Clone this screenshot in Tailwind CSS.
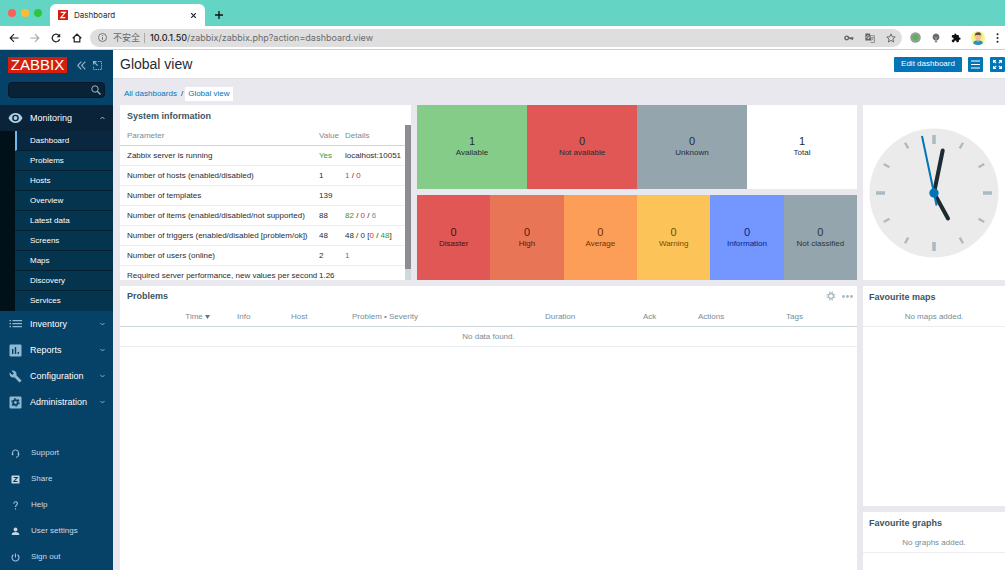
<!DOCTYPE html>
<html lang="en">
<head>
  <meta charset="UTF-8" />
  <meta name="viewport" content="width=device-width, initial-scale=1.0" />
  <title>Dashboard</title>
  <script src="https://cdn.jsdelivr.net/npm/@tailwindcss/browser@4"></script>
</head>
<body class="h-screen flex flex-col overflow-hidden bg-[#e9e8ee] text-[#1f2c33] text-[8px] leading-[12px] font-['Liberation_Sans','Noto_Sans_CJK_SC',sans-serif]">

<!-- browser tabs -->
<div class="h-[26px] shrink-0 bg-[#64d5c5] flex items-end pl-2">
  <div class="flex gap-[5px] h-[26px] items-center w-[42px]">
    <span class="size-2 rounded-full bg-[#fc5f57]"></span>
    <span class="size-2 rounded-full bg-[#fdbc2f]"></span>
    <span class="size-2 rounded-full bg-[#28c840]"></span>
  </div>
  <div class="h-[22px] w-[155px] bg-white rounded-t-md flex items-center px-2 font-[Inter,sans-serif]">
    <svg class="size-[10px] mr-[6px]" viewBox="0 0 10 10"><rect width="10" height="10" fill="#d31f10"/><path d="M2.8 2.4h4.4L2.9 7.6h4.4" fill="none" stroke="#fff" stroke-width="1.2"/></svg>
    <span class="flex-1">Dashboard</span>
    <button aria-label="Close tab"><svg class="size-[5px] mr-px" viewBox="0 0 5 5" stroke="#222" stroke-width="1.1"><path d="M0 0l5 5M5 0L0 5"/></svg></button>
  </div>
  <button class="ml-[10px] h-[22px]" aria-label="New tab"><svg class="size-2" viewBox="0 0 8 8" stroke="#111" stroke-width="1.3"><path d="M4 0v8M0 4h8"/></svg></button>
</div>

<!-- browser toolbar -->
<div class="h-[24px] shrink-0 bg-white border-b border-[#cfcfcf] flex items-center pl-[9px] pr-[5px]">
  <div class="flex gap-[11px] w-[81px]">
    <button aria-label="Back"><svg class="size-[10px]" viewBox="0 0 10 10" fill="none" stroke="#222" stroke-width="1.2"><path d="M9.5 5H1.3M5 1.2L1.2 5 5 8.8"/></svg></button>
    <button aria-label="Forward"><svg class="size-[10px]" viewBox="0 0 10 10" fill="none" stroke="#a5a5a5" stroke-width="1.1"><path d="M.5 5h8.2M5 1.2L8.8 5 5 8.8"/></svg></button>
    <button aria-label="Reload"><svg class="size-[10px]" viewBox="0 0 10 10" fill="none" stroke="#222" stroke-width="1.3"><path d="M8.6 6.2A3.8 3.8 0 1 1 7.9 2.5"/><path d="M9.2.6v3.6H5.6z" fill="#222" stroke="none"/></svg></button>
    <button aria-label="Home"><svg class="size-[10px]" viewBox="0 0 10 10" fill="none" stroke="#222" stroke-width="1.2"><path d="M.7 5.3L5 1.2l4.3 4.1M2.2 4.6v4.2h5.6V4.6"/></svg></button>
  </div>
  <label class="flex-1 h-[18px] rounded-full bg-[#dededf] flex items-center pl-2 pr-[6px] text-[9px] text-[#6a6a6c] font-[Inter,'Noto_Sans_CJK_SC',sans-serif]">
    <svg class="size-[9px] mr-[6px]" viewBox="0 0 9 9" fill="none" stroke="#6a6a6c" stroke-width="0.9"><circle cx="4.5" cy="4.5" r="4"/><path d="M4.5 4v2.8M4.5 2.2v1"/></svg>
    <span>不安全</span>
    <span class="w-px h-[10px] bg-[#aaa] ml-[4px] mr-[5px]"></span>
    <span class="text-[#222] font-medium">10.0.1.50</span>
    <input type="text" value="/zabbix/zabbix.php?action=dashboard.view" class="flex-1 min-w-0 outline-none" />
    <span class="flex items-center gap-[11px] text-[#5f6062]">
      <svg class="size-[10px]" viewBox="0 0 10 10" fill="none" stroke="currentColor" stroke-width="1.3"><circle cx="2.7" cy="5" r="1.8"/><path d="M4.5 5h5M8.2 5v2M6.4 5v1.3"/></svg>
      <svg class="size-[10px]" viewBox="0 0 10 10"><path d="M4.6 2.6h4.9v6.9H5.4" fill="none" stroke="#777" stroke-width=".7"/><path d="M.4.4h4.4l1.8 7H.4z" fill="#606163"/><path d="M4.3 3.3a1.4 1.4 0 1 0 .2 1.2H3.1" fill="none" stroke="#ddd" stroke-width=".8"/><path d="M6 4.6h2.9M7.4 3.9v.7M8.4 4.6c-.2 1.3-1 2.2-1.8 2.8M6.7 5.4c.3.8 1 1.6 1.8 2" fill="none" stroke="#777" stroke-width=".6"/></svg>
      <svg class="size-[10px]" viewBox="0 0 10 10" fill="none" stroke="currentColor" stroke-width="0.9"><path d="M5 .9l1.2 2.8 3 .3-2.3 2 .7 3L5 7.4 2.4 9l.7-3L.8 4l3-.3z"/></svg>
    </span>
  </label>
  <div class="flex items-center gap-[10px] ml-[8px]">
    <svg class="size-[11px]" viewBox="0 0 11 11"><circle cx="5.5" cy="5.5" r="5.3" fill="#9a9a9a"/><circle cx="5.5" cy="5.5" r="2.9" fill="#4bbf4e"/></svg>
    <svg class="size-[10px]" viewBox="0 0 10 10"><path d="M5 .6a3.6 3.6 0 0 1 2 6.5H3A3.6 3.6 0 0 1 5 .6z" fill="#666"/><path d="M3.5 3.8L5 5.2l1.5-1.4M5 5v2" fill="none" stroke="#ccc" stroke-width=".6"/><path d="M3.7 7.2h2.6v1.4L5.6 9.6H4.4l-.7-1z" fill="#8a8a8a"/></svg>
    <svg class="size-[10px]" viewBox="0 0 24 24" fill="#111"><path d="M20.5 11H19V7a2 2 0 0 0-2-2h-4V3.5a2.5 2.5 0 0 0-5 0V5H4a2 2 0 0 0-2 2v3.8h1.5a2.7 2.7 0 0 1 0 5.4H2V20a2 2 0 0 0 2 2h3.8v-1.5a2.7 2.7 0 0 1 5.4 0V22H17a2 2 0 0 0 2-2v-4h1.5a2.5 2.5 0 0 0 0-5z"/></svg>
    <svg class="size-[14px]" viewBox="0 0 14 14"><circle cx="7" cy="7" r="7" fill="#f3f584"/><path d="M2 12.2C2.5 10 4.5 9.5 7 9.5s4.5.5 5 2.7A7 7 0 0 1 7 14a7 7 0 0 1-5-1.8z" fill="#2591c9"/><path d="M5.8 8h2.4v2L7 11l-1.2-1z" fill="#e9a183"/><ellipse cx="7" cy="5.9" rx="2.9" ry="3.3" fill="#f6b99a"/><path d="M3.8 5.5C3.5 2.5 5 1.2 7.3 1.2S10.6 2.7 10.2 5.5L9.5 3.8C8 4.2 6 4 4.7 3.7z" fill="#5b4a45"/></svg>
    <button aria-label="Browser menu"><svg class="w-[5px] h-[10px]" viewBox="0 0 5 10" fill="#222"><circle cx="2.5" cy="1.3" r="1"/><circle cx="2.5" cy="5" r="1"/><circle cx="2.5" cy="8.7" r="1"/></svg></button>
  </div>
</div>

<div class="flex flex-1 min-h-0">

  <!-- sidebar -->
  <aside class="w-[113px] shrink-0 bg-[#064167] text-white flex flex-col">
    <div class="flex items-center px-2 pt-[7px]">
      <a href="#" class="w-[59px] h-4 bg-[#d31f10] text-center text-[15px] leading-4">ZABBIX</a>
      <button class="ml-[10px]" aria-label="Collapse sidebar"><svg class="size-[9px]" viewBox="0 0 9 9" fill="none" stroke="#8fb9d3" stroke-width="1.1"><path d="M4.3.7L.7 4.5l3.6 3.8M8.3.7L4.7 4.5l3.6 3.8"/></svg></button>
      <button class="ml-[7px]" aria-label="Hide sidebar"><svg class="size-[9px]" viewBox="0 0 9 9" fill="none" stroke="#8fb9d3"><path d="M5 .5h3.5v8h-8V5" stroke-dasharray="1.5 .8" stroke-width=".9"/><path d="M.6 3.6v-3h3M.7.7L4.6 4.6" stroke-width="1.2"/></svg></button>
    </div>
    <label class="mx-2 mt-[9px] mb-[7px] h-4 flex items-center bg-[#0a2236] border border-[#06182a] rounded-sm px-[3px]">
      <input type="text" aria-label="Search" class="flex-1 min-w-0 outline-none" />
      <svg class="size-[10px]" viewBox="0 0 10 10" fill="none" stroke="#8fb9d3" stroke-width="1"><circle cx="4" cy="4" r="3.2"/><path d="M6.3 6.3L9.5 9.5" stroke-width="1.3"/></svg>
    </label>

    <nav class="text-[9px]">
      <a href="#" class="h-[26px] flex items-center px-2 bg-[#0a2338]">
        <svg class="w-[15px] h-[12px] mr-[7px]" viewBox="0 0 15 12"><path d="M.5 6C2 2.7 4.5 1 7.5 1S13 2.7 14.500 6C13 9.3 10.500 11 7.5 11S2 9.3.5 6z" fill="#a9cfe6"/><circle cx="7.5" cy="6" r="3.3" fill="#0a2338"/><circle cx="7.5" cy="6" r="1.9" fill="#a9cfe6"/></svg>
        <span class="flex-1">Monitoring</span>
        <svg class="w-[5px] h-[4px]" viewBox="0 0 5 4" fill="none" stroke="#a9c5d6" stroke-width=".9"><path d="M.5 3l2-2 2 2"/></svg>
      </a>
      <div class="bg-[#00111a] pl-[15px] text-[8px]">
        <a href="#" class="flex items-center h-5 pl-[13px] border-l-2 border-l-[#6eb9ee] bg-[#0a2740] border-b border-b-[#02202f]">Dashboard</a>
        <a href="#" class="flex items-center h-5 pl-[15px] bg-[#05354e] border-b border-[#02202f]">Problems</a>
        <a href="#" class="flex items-center h-5 pl-[15px] bg-[#05354e] border-b border-[#02202f]">Hosts</a>
        <a href="#" class="flex items-center h-5 pl-[15px] bg-[#05354e] border-b border-[#02202f]">Overview</a>
        <a href="#" class="flex items-center h-5 pl-[15px] bg-[#05354e] border-b border-[#02202f]">Latest data</a>
        <a href="#" class="flex items-center h-5 pl-[15px] bg-[#05354e] border-b border-[#02202f]">Screens</a>
        <a href="#" class="flex items-center h-5 pl-[15px] bg-[#05354e] border-b border-[#02202f]">Maps</a>
        <a href="#" class="flex items-center h-5 pl-[15px] bg-[#05354e] border-b border-[#02202f]">Discovery</a>
        <a href="#" class="flex items-center h-5 pl-[15px] bg-[#05354e]">Services</a>
      </div>
      <a href="#" class="h-[26px] flex items-center pl-[9px] pr-2">
        <svg class="size-[13px] mr-[8px]" viewBox="0 0 13 13" stroke="#8fb9d3" stroke-width="1.2"><path d="M3.5 2.7H13M3.5 5.7H13M3.5 8.7H13M.5 2.7H2M.5 5.7H2M.5 8.7H2"/></svg>
        <span class="flex-1">Inventory</span>
        <svg class="w-[5px] h-[4px]" viewBox="0 0 5 4" fill="none" stroke="#8fb9d3" stroke-width=".9"><path d="M.5 1l2 2 2-2"/></svg>
      </a>
      <a href="#" class="h-[26px] flex items-center pl-[9px] pr-2">
        <svg class="size-[13px] mr-[8px]" viewBox="0 0 13 13"><rect x=".5" y=".5" width="12" height="12" rx="1.3" fill="#8fb9d3"/><path d="M3.7 5v5M6.5 3v7M9.3 8v2" stroke="#064167" stroke-width="1.4"/></svg>
        <span class="flex-1">Reports</span>
        <svg class="w-[5px] h-[4px]" viewBox="0 0 5 4" fill="none" stroke="#8fb9d3" stroke-width=".9"><path d="M.5 1l2 2 2-2"/></svg>
      </a>
      <a href="#" class="h-[26px] flex items-center pl-[9px] pr-2">
        <svg class="size-[13px] mr-[8px]" viewBox="0 0 24 24" fill="#8fb9d3"><path d="M22.7 19l-9.1-9.1c.9-2.3.4-5-1.5-6.9-2-2-5-2.4-7.4-1.3L9 6 6 9 1.6 4.7C.4 7.1.9 10.1 2.9 12.1c1.9 1.9 4.6 2.4 6.9 1.5l9.1 9.1c.4.4 1 .4 1.4 0l2.300-2.300c.5-.4.5-1.100.1-1.400z"/></svg>
        <span class="flex-1">Configuration</span>
        <svg class="w-[5px] h-[4px]" viewBox="0 0 5 4" fill="none" stroke="#8fb9d3" stroke-width=".9"><path d="M.5 1l2 2 2-2"/></svg>
      </a>
      <a href="#" class="h-[26px] flex items-center pl-[9px] pr-2">
        <svg class="size-[13px] mr-[8px]" viewBox="0 0 13 13"><rect x=".5" y=".5" width="12" height="12" rx="1.3" fill="#8fb9d3"/><circle cx="6.5" cy="6.5" r="2.3" fill="none" stroke="#064167" stroke-width="1.8"/><circle cx="6.5" cy="6.5" r="3.7" fill="none" stroke="#064167" stroke-width="1.2" stroke-dasharray="1.9 1.97"/></svg>
        <span class="flex-1">Administration</span>
        <svg class="w-[5px] h-[4px]" viewBox="0 0 5 4" fill="none" stroke="#8fb9d3" stroke-width=".9"><path d="M.5 1l2 2 2-2"/></svg>
      </a>
    </nav>

    <nav class="mt-auto text-[#c9dbe6]">
      <a href="#" class="h-[26px] flex items-center pl-[11px]">
        <svg class="size-[9px] mr-[11px]" viewBox="0 0 9 9" fill="none" stroke="#a4c3d6" stroke-width="1"><path d="M1.4 5V4a3.1 3.1 0 0 1 6.2 0v2.2c0 1.3-1 2-2.6 2"/><path d="M1.6 4.3v2M7.4 4.3v2" stroke-width="1.5"/></svg>
        Support
      </a>
      <a href="#" class="h-[26px] flex items-center pl-[11px]">
        <svg class="size-[9px] mr-[11px]" viewBox="0 0 9 9"><rect x=".5" y=".5" width="8" height="8" rx=".6" fill="#c3d6e2"/><path d="M2.7 2.5h3.6L2.8 6.5h3.7" fill="none" stroke="#064167" stroke-width="1.1"/></svg>
        Share
      </a>
      <a href="#" class="h-[26px] flex items-center pl-[11px]">
        <svg class="size-[9px] mr-[11px]" viewBox="0 0 9 9" fill="none" stroke="#a4c3d6" stroke-width="1.1"><path d="M2.7 2.7C2.7.2 6.4.2 6.4 2.6c0 1.4-1.9 1.6-1.9 3.300M4.5 7.2v1.3"/></svg>
        Help
      </a>
      <a href="#" class="h-[26px] flex items-center pl-[11px]">
        <svg class="size-[9px] mr-[11px]" viewBox="0 0 9 9" fill="#c3d6e2"><circle cx="4.5" cy="2.5" r="1.9"/><path d="M.8 8V7c0-1.2 2-2 3.7-2s3.7.8 3.7 2v1z"/></svg>
        User settings
      </a>
      <a href="#" class="h-[26px] flex items-center pl-[11px]">
        <svg class="size-[9px] mr-[11px]" viewBox="0 0 9 9" fill="none" stroke="#a4c3d6" stroke-width="1.1"><path d="M2.4 1.7a3.5 3.5 0 1 0 4.2 0M4.5.5v4"/></svg>
        Sign out
      </a>
    </nav>
  </aside>

  <!-- page -->
  <main class="flex-1 min-w-0 flex flex-col">
    <header class="h-[29px] shrink-0 bg-white border-b border-[#e1e0e6] flex items-center pl-[7px]">
      <h1 class="flex-1 text-[14px] leading-4">Global view</h1>
      <button class="h-[15px] w-[68px] bg-[#0275b8] text-white rounded-[1px]">Edit dashboard</button>
      <button class="size-[15px] ml-[6px] bg-[#0275b8] rounded-[1px] flex items-center justify-center" aria-label="Actions">
        <svg class="w-[9px] h-[9px]" viewBox="0 0 9 9" stroke="#fff" stroke-width="1.2"><path d="M0 1h9M0 4.5h9M0 8h9"/></svg>
      </button>
      <button class="size-[15px] ml-[7px] bg-[#0275b8] rounded-[1px] flex items-center justify-center" aria-label="Kiosk mode">
        <svg class="size-[9px]" viewBox="0 0 9 9" fill="none" stroke="#fff" stroke-width="1.2"><path d="M.6 3V.6H3M6 .6h2.4V3M8.4 6v2.400H6M3 8.4H.6V6M.6.6l2.600 2.600M8.4.6L5.8 3.200M8.4 8.4L5.8 5.8M.6 8.4l2.600-2.600"/></svg>
      </button>
    </header>

    <div class="flex items-center pl-[11px] pt-[8px] pb-[4px] text-[#0275b8]">
      <a href="#">All dashboards</a>
      <span class="pl-[4px] pr-[2px] text-[#1f2c33]">/</span>
      <a href="#" class="bg-white px-[3px] leading-[14px]">Global view</a>
    </div>

    <div class="flex-1 min-h-0 pl-[7px] grid grid-cols-[291fr_440fr_142fr] grid-rows-[84px_85px_minmax(0,1fr)] gap-[6px]">

      <section class="row-span-2 min-w-0 bg-white flex flex-col overflow-hidden">
        <h2 class="h-5 shrink-0 px-[7px] text-[9px] leading-[22px] font-bold text-[#3c5563]">System information</h2>
        <div class="flex-1 min-h-0 flex overflow-hidden">
          <div class="flex-1 min-w-0">
            <table class="w-full table-fixed whitespace-nowrap text-left border-collapse [&_th]:pt-[2px] [&_td]:pt-[2px]">
              <colgroup><col class="w-[193px]"><col class="w-[26px]"><col></colgroup>
              <thead>
                <tr class="h-5 border-b border-[#ccd5d9] text-[#768d99]"><th class="font-normal pl-[7px]">Parameter</th><th class="font-normal pl-[6px]">Value</th><th class="font-normal pl-[6px]">Details</th></tr>
              </thead>
              <tbody>
                <tr class="h-5 border-b border-[#ebeef0]"><td class="pl-[7px]">Zabbix server is running</td><td class="pl-[6px] text-[#2d9a33]">Yes</td><td class="pl-[6px]">localhost:10051</td></tr>
                <tr class="h-5 border-b border-[#ebeef0]"><td class="pl-[7px]">Number of hosts (enabled/disabled)</td><td class="pl-[6px]">1</td><td class="pl-[6px]"><span class="text-[#2d9a33]">1</span> / <span class="text-[#e32725]">0</span></td></tr>
                <tr class="h-5 border-b border-[#ebeef0]"><td class="pl-[7px]">Number of templates</td><td class="pl-[6px]">139</td><td></td></tr>
                <tr class="h-5 border-b border-[#ebeef0]"><td class="pl-[7px]">Number of items (enabled/disabled/not supported)</td><td class="pl-[6px]">88</td><td class="pl-[6px]"><span class="text-[#2d9a33]">82</span> / <span class="text-[#e32725]">0</span> / <span class="text-[#768d99]">6</span></td></tr>
                <tr class="h-5 border-b border-[#ebeef0]"><td class="pl-[7px]">Number of triggers (enabled/disabled [problem/ok])</td><td class="pl-[6px]">48</td><td class="pl-[6px]">48 / 0 [<span class="text-[#e32725]">0</span> / <span class="text-[#2d9a33]">48</span>]</td></tr>
                <tr class="h-5 border-b border-[#ebeef0]"><td class="pl-[7px]">Number of users (online)</td><td class="pl-[6px]">2</td><td class="pl-[6px] text-[#2d9a33]">1</td></tr>
                <tr class="h-5"><td class="pl-[7px]">Required server performance, new values per second</td><td class="pl-[6px]">1.26</td><td></td></tr>
              </tbody>
            </table>
          </div>
          <div class="w-[6px] shrink-0 bg-[#cfd8dc]"><div class="h-[93%] bg-[#8d8c91]"></div></div>
        </div>
      </section>

      <section class="grid grid-cols-4 text-center bg-white">
        <div class="bg-[#86cc89] flex flex-col justify-center"><span class="text-[11px]">1</span><span>Available</span></div>
        <div class="bg-[#e15755] flex flex-col justify-center"><span class="text-[11px]">0</span><span>Not available</span></div>
        <div class="bg-[#94a5ad] flex flex-col justify-center"><span class="text-[11px]">0</span><span>Unknown</span></div>
        <div class="flex flex-col justify-center"><span class="text-[11px]">1</span><span>Total</span></div>
      </section>

      <section class="row-span-2 bg-white flex items-center justify-center">
        <svg class="size-[130px]" viewBox="-65 -65 130 130">
          <circle r="64.5" fill="#ebebeb"/>
          <path d="M0-58v9M0 49v9M-58 0h9M49 0h9" stroke="#acbac2" stroke-width="3.6"/>
          <g stroke="#acbac2" stroke-width="2.4">
            <path d="M0-58v6.5" transform="rotate(30)"/><path d="M0-58v6.5" transform="rotate(60)"/>
            <path d="M0-58v6.5" transform="rotate(120)"/><path d="M0-58v6.5" transform="rotate(150)"/>
            <path d="M0-58v6.5" transform="rotate(210)"/><path d="M0-58v6.5" transform="rotate(240)"/>
            <path d="M0-58v6.5" transform="rotate(300)"/><path d="M0-58v6.5" transform="rotate(330)"/>
          </g>
          <path d="M0 0L14 25.5M0 0L8.7-42.5" stroke="#1c2a32" stroke-width="4" stroke-linecap="round"/>
          <path d="M2.6 12.5L-12-57" stroke="#0275b8" stroke-width="2"/>
          <circle r="4.7" fill="#0275b8"/>
        </svg>
      </section>

      <section class="grid grid-cols-6 text-center">
        <div class="bg-[#e15755] text-[#4b0f0e] flex flex-col justify-center"><span class="text-[11px]">0</span><span>Disaster</span></div>
        <div class="bg-[#e87656] text-[#5a1808] flex flex-col justify-center"><span class="text-[11px]">0</span><span>High</span></div>
        <div class="bg-[#fc9e57] text-[#733100] flex flex-col justify-center"><span class="text-[11px]">0</span><span>Average</span></div>
        <div class="bg-[#fcc458] text-[#6e4d00] flex flex-col justify-center"><span class="text-[11px]">0</span><span>Warning</span></div>
        <div class="bg-[#7396ff] text-[#00268e] flex flex-col justify-center"><span class="text-[11px]">0</span><span>Information</span></div>
        <div class="bg-[#94a5ad] text-[#2a353a] flex flex-col justify-center"><span class="text-[11px]">0</span><span>Not classified</span></div>
      </section>

      <section class="col-span-2 bg-white overflow-hidden">
        <div class="h-5 flex items-center px-[4px] gap-[6px]">
          <h2 class="flex-1 pl-[3px] text-[9px] leading-[22px] font-bold text-[#3c5563]">Problems</h2>
          <button aria-label="Widget settings"><svg class="size-[10px]" viewBox="0 0 10 10" fill="none" stroke="#a9b8c0"><circle cx="5" cy="5" r="2.5" stroke-width="1.3"/><path d="M3.800 .5v2M6.200 .5v2M3.800 7.500v2M6.200 7.500v2M.5 3.800h2M.5 6.200h2M7.500 3.800h2M7.500 6.200h2" stroke-width="1.1"/></svg></button>
          <button aria-label="Widget actions"><svg class="w-[11px] h-[3px]" viewBox="0 0 11 3" fill="#a9b8c0"><circle cx="1.5" cy="1.5" r="1.4"/><circle cx="5.5" cy="1.5" r="1.4"/><circle cx="9.5" cy="1.5" r="1.4"/></svg></button>
        </div>
        <table class="w-full table-fixed whitespace-nowrap text-left text-[#768d99] border-collapse [&_th]:pt-[2px] [&_td]:pt-[2px]">
          <colgroup><col class="w-[110px]"><col class="w-[54px]"><col class="w-[61px]"><col><col class="w-[98px]"><col class="w-[55px]"><col class="w-[88px]"><col class="w-[78px]"></colgroup>
          <thead>
            <tr class="h-5 border-b border-[#ccd5d9]">
              <th class="font-normal pr-5 text-right">Time <svg class="inline w-[5px] h-[4px] align-baseline" viewBox="0 0 5 4" fill="#5f7885"><path d="M0 0h5L2.5 4z"/></svg></th>
              <th class="font-normal pl-[7px]">Info</th>
              <th class="font-normal pl-[7px]">Host</th>
              <th class="font-normal pl-[7px]">Problem • Severity</th>
              <th class="font-normal pl-[7px]">Duration</th>
              <th class="font-normal pl-[7px]">Ack</th>
              <th class="font-normal pl-[7px]">Actions</th>
              <th class="font-normal pl-[7px]">Tags</th>
            </tr>
          </thead>
          <tbody>
            <tr class="h-5 border-b border-[#ebeef0]"><td colspan="8" class="text-center">No data found.</td></tr>
          </tbody>
        </table>
      </section>

      <div class="min-h-0 flex flex-col gap-[6px]">
        <section class="h-[220px] shrink-0 bg-white">
          <h2 class="h-5 px-[6px] text-[9px] leading-[22px] font-bold text-[#3c5563]">Favourite maps</h2>
          <p class="h-[21px] leading-[22px] text-center text-[#768d99] border-b border-[#ebeef0]">No maps added.</p>
        </section>
        <section class="flex-1 bg-white">
          <h2 class="h-5 px-[6px] text-[9px] leading-[22px] font-bold text-[#3c5563]">Favourite graphs</h2>
          <p class="h-[21px] leading-[22px] text-center text-[#768d99] border-b border-[#ebeef0]">No graphs added.</p>
        </section>
      </div>
    </div>
  </main>
</div>

</body>
</html>
